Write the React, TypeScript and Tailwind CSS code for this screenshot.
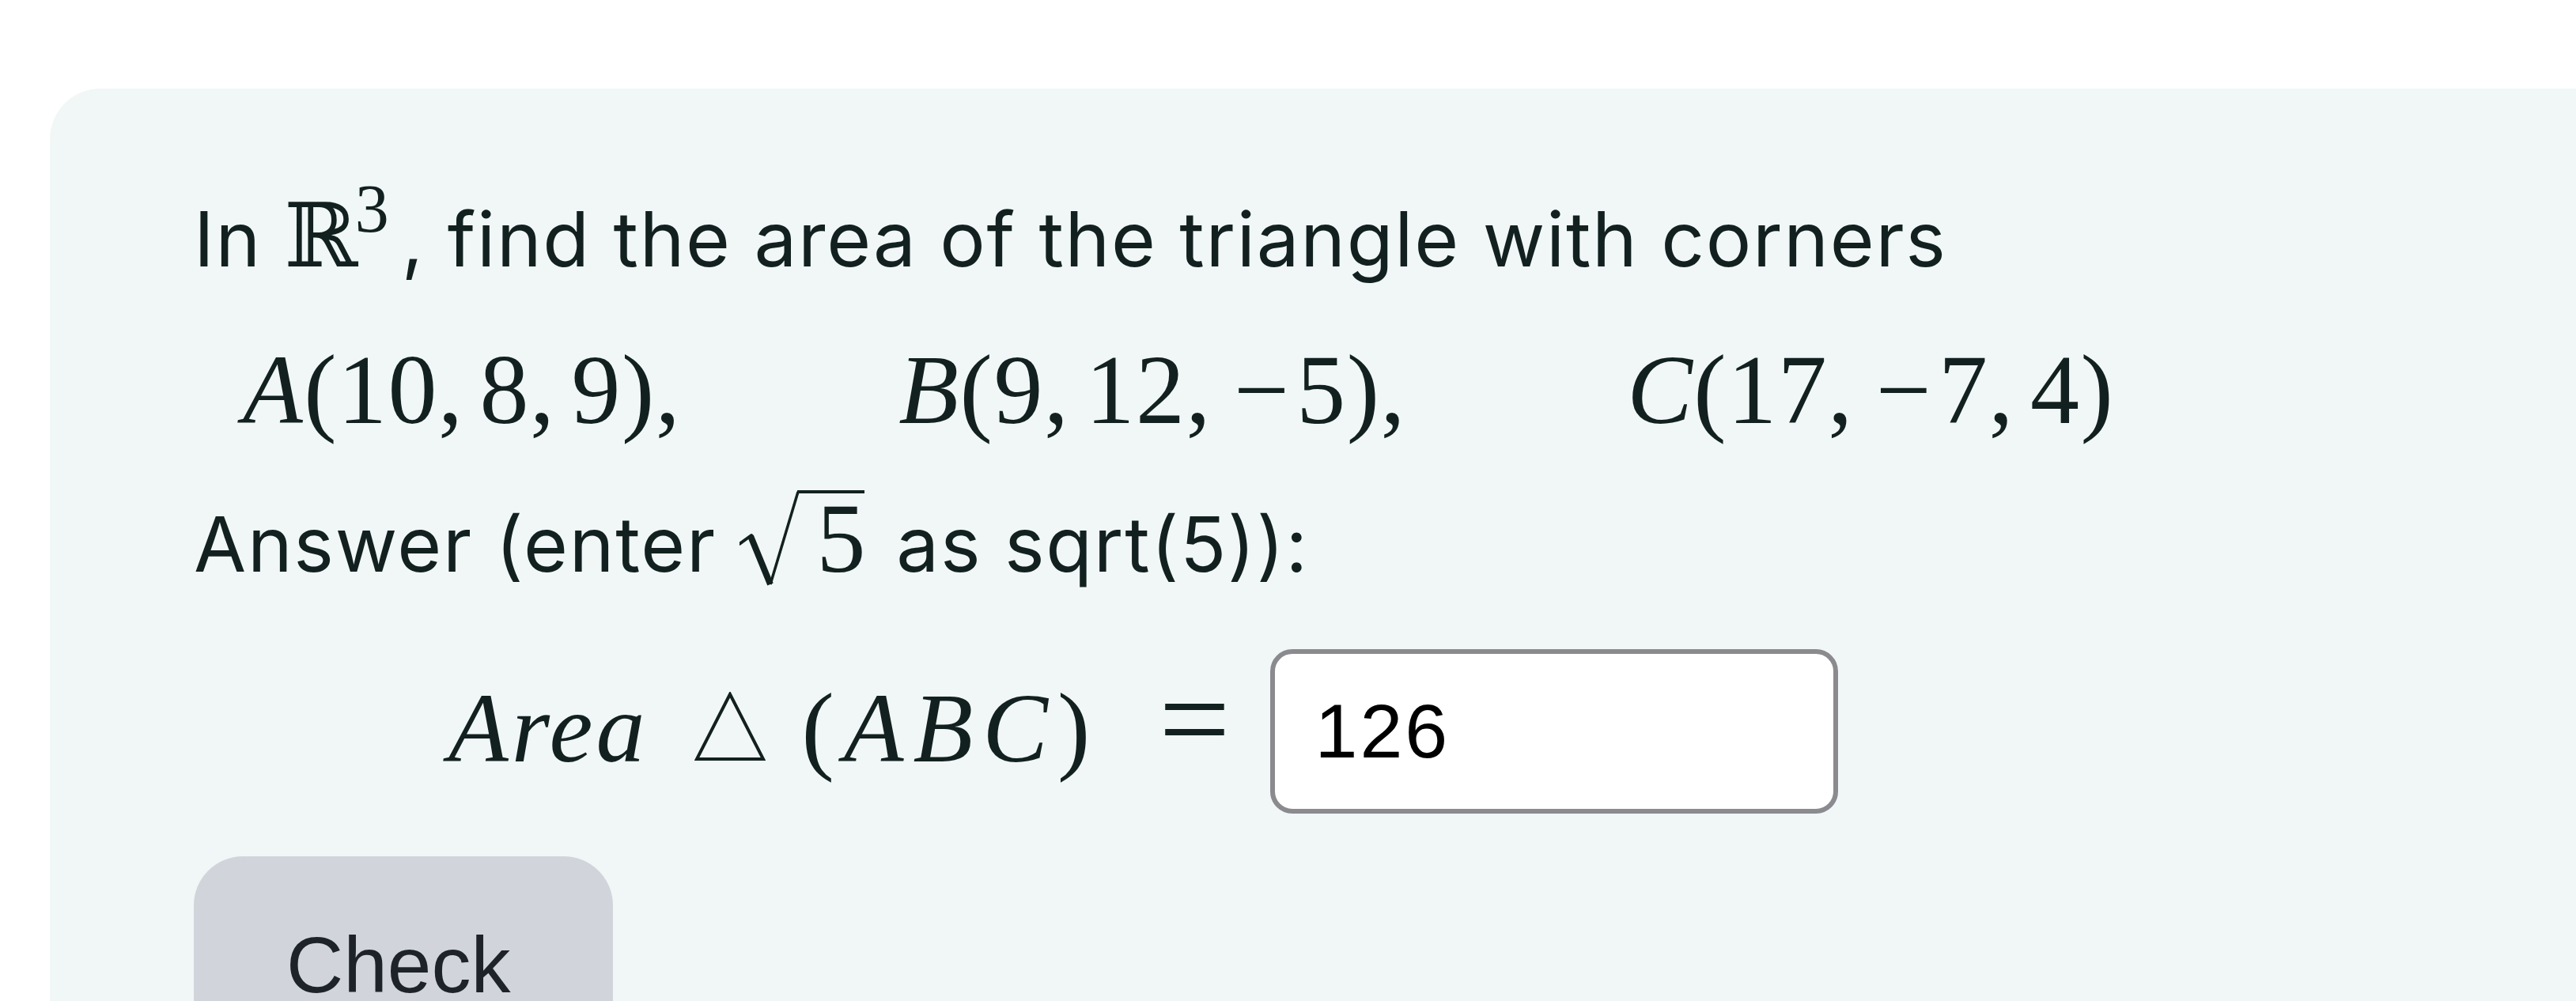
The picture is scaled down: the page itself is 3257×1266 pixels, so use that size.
export default function App() {
  const thin = <span className="inline-block w-[20px]" />;
  return (
    <div className="w-full h-[1266px] overflow-hidden bg-white">
      <div className="ml-[63px] mt-[112px] w-[3400px] h-[1400px] rounded-l-[64px] bg-[#f1f7f7] pl-[182px] pt-[110px] text-[#12211f] font-['Inter',sans-serif] tracking-[1.7px]">
        {/* Row 1 */}
        <div className="h-[160px] leading-[160px] text-[96px] whitespace-nowrap">
          In{' '}
          <span className="font-['DejaVu_Serif','DejaVu_Sans',serif] text-[112px] leading-[0] tracking-normal">ℝ</span>
          <span className="ml-[-4px] font-['Liberation_Serif',serif] text-[86px] leading-[0] align-[44px] tracking-normal">3</span>
          <span className="inline-block w-[16px]" />
          , find the area of the triangle with corners
        </div>

        {/* Row 2 */}
        <div className="mt-[38px] h-[160px] leading-[160px] text-[96px] whitespace-nowrap">
          <span className="ml-[62px] font-['Liberation_Serif',serif] text-[124px] leading-[0] tracking-[1.5px]">
            <span className="italic">A</span>(10,{thin}8,{thin}9),
            <span className="inline-block w-[275px]" />
            <span className="italic">B</span>(9,{thin}12,{thin}<span className="mx-[8px]">−</span>5),
            <span className="inline-block w-[279px]" />
            <span className="italic">C</span>(17,{thin}<span className="mx-[8px]">−</span>7,{thin}4)
          </span>
        </div>

        {/* Row 3 */}
        <div className="mt-[28px] h-[160px] leading-[160px] text-[96px] whitespace-nowrap">
          Answer (enter{' '}
          <svg width="158" height="122" viewBox="0 0 158 122" className="inline-block align-[-19px]">
            <path d="M0 68 L15 57" stroke="#12211f" strokeWidth="4" fill="none" strokeLinecap="round" />
            <path d="M14 58 L39 119" stroke="#12211f" strokeWidth="8" fill="none" strokeLinejoin="miter" />
            <path d="M39 119 L74 2" stroke="#12211f" strokeWidth="3.5" fill="none" />
            <path d="M73 2 H158" stroke="#12211f" strokeWidth="4" fill="none" />
          </svg>
          <span className="ml-[-60px] font-['Liberation_Serif',serif] text-[124px] leading-[0] tracking-normal">5</span>
          <span className="inline-block w-[10px]" />{' '}
          as sqrt(5)):
        </div>

        {/* Row 4 */}
        <div className="mt-[53px] h-[208px] leading-[208px] text-[96px] whitespace-nowrap">
          <span className="ml-[322px] font-['Liberation_Serif',serif] italic text-[124px] leading-[0] tracking-[4px]">Area</span>
          <span className="inline-block w-[59px]" />
          <svg width="90" height="88" viewBox="0 0 90 88" className="inline-block align-baseline">
            <polygon points="45,3 3,85 87,85" stroke="#12211f" strokeWidth="4" fill="none" strokeLinejoin="miter" />
          </svg>
          <span className="inline-block w-[45px]" />
          <span className="font-['Liberation_Serif',serif] text-[124px] leading-[0] tracking-normal">
            (<span className="inline-block w-[12px]" /><span className="italic tracking-[12px]">ABC</span>)
          </span>
          <span className="inline-block w-[87px]" />
          <span className="font-['Liberation_Serif',serif] text-[160px] leading-[0] tracking-normal">=</span>
          <span className="inline-block w-[51px]" />
          <input
            defaultValue="126"
            className="inline-block align-[5px] h-[208px] w-[718px] rounded-[28px] border-[6px] border-[#8b8b8f] bg-white pl-[50px] font-['Liberation_Sans',Arial,sans-serif] text-[97px] tracking-[3px] text-black outline-none"
          />
        </div>

        {/* Button */}
        <button className="mt-[54px] block w-[530px] h-[274px] rounded-[62px] bg-[#d1d5db] pl-[117px] text-left font-['Liberation_Sans',Arial,sans-serif] text-[100px] leading-[120px] tracking-normal text-[#1e2329]">
          Check
        </button>
      </div>
    </div>
  );
}
